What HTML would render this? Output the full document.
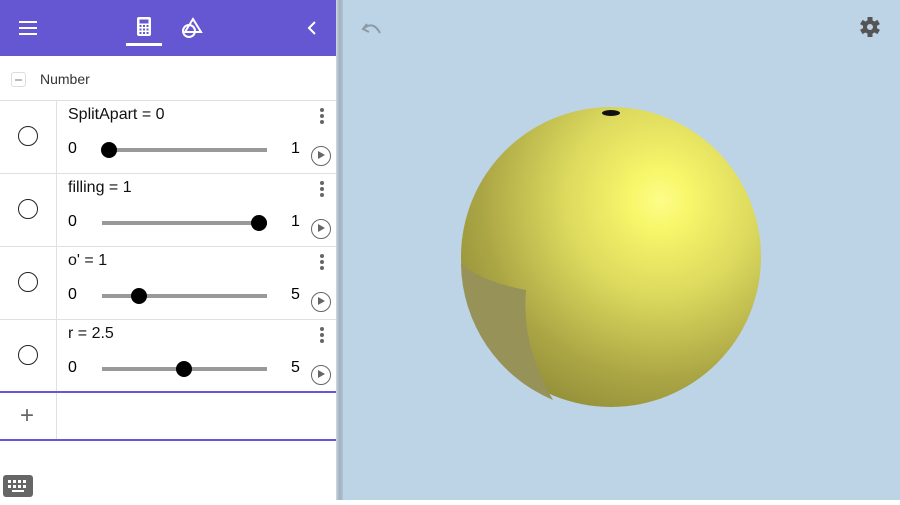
<!DOCTYPE html>
<html><head><style>
*{margin:0;padding:0;box-sizing:border-box}
body{width:900px;height:500px;position:relative;overflow:hidden;font-family:"Liberation Sans",sans-serif;background:#fff}
.hdr{position:absolute;left:0;top:0;width:336px;height:56px;background:#6557d2}
.div{position:absolute;left:336px;top:0;width:7px;height:500px;background:linear-gradient(90deg,#cfd8df,#9fb0c0 50%,#b0c2d2)}
.view{position:absolute;left:343px;top:0;width:557px;height:500px;background:#bdd3e6}
.row{position:absolute;left:0;width:336px;height:73px;border-bottom:1px solid #e0e0e0}
.row .vl{position:absolute;left:56px;top:0;width:1px;height:100%;background:#e0e0e0}
.circ{position:absolute;left:18px;top:25px;width:20px;height:20px;border:1.5px solid #222;border-radius:50%}
.lbl{position:absolute;left:68px;top:5px;font-size:16px;color:#111}
.n0{position:absolute;left:68px;top:39px;font-size:16px}
.n1{position:absolute;left:291px;top:39px;font-size:16px}
.trk{position:absolute;left:102px;top:47px;width:165px;height:4px;background:#999}
.knob{position:absolute;top:41px;width:16px;height:16px;border-radius:50%;background:#000}
.dots{position:absolute;left:320px;top:7px;width:4px}
.dots i{display:block;width:4px;height:4px;border-radius:50%;background:#666;margin-bottom:2px}
.play{position:absolute;left:311px;top:45px;width:20px;height:20px;border:1.5px solid #666;border-radius:50%}
.play:after{content:"";position:absolute;left:6px;top:4px;border-left:7px solid #666;border-top:4.5px solid transparent;border-bottom:4.5px solid transparent}
</style></head><body>
<div class="hdr">
<svg width="336" height="56" style="position:absolute;left:0;top:0">
<g stroke="#fff" stroke-width="2"><line x1="19" y1="22" x2="37" y2="22"/><line x1="19" y1="28" x2="37" y2="28"/><line x1="19" y1="34" x2="37" y2="34"/></g>
<rect x="137" y="17" width="14" height="19" rx="2" fill="#fff"/>
<rect x="139.5" y="19.5" width="9" height="4" fill="#6557d2"/>
<g fill="#6557d2"><rect x="139.5" y="25" width="2" height="2"/><rect x="143" y="25" width="2" height="2"/><rect x="146.5" y="25" width="2" height="2"/><rect x="139.5" y="28.5" width="2" height="2"/><rect x="143" y="28.5" width="2" height="2"/><rect x="146.5" y="28.5" width="2" height="2"/><rect x="139.5" y="32" width="2" height="2"/><rect x="143" y="32" width="2" height="2"/><rect x="146.5" y="32" width="2" height="2"/></g>
<rect x="126" y="43" width="36" height="3" fill="#fff"/>
<g fill="none" stroke="#fff" stroke-width="2"><circle cx="189" cy="31" r="6"/><path d="M193 19 L201 32 L185 32 Z"/></g>
<path d="M315 22 L309 28 L315 34" fill="none" stroke="#fff" stroke-width="2"/>
</svg></div>
<div style="position:absolute;left:11px;top:72px;width:15px;height:15px;border:1px solid #ddd;border-radius:3px"><div style="position:absolute;left:3px;top:6px;width:7px;height:1.5px;background:#bbb"></div></div>
<div style="position:absolute;left:40px;top:71px;font-size:14px;color:#333">Number</div>
<div style="position:absolute;left:0;top:100px;width:336px;height:1px;background:#e0e0e0"></div>

<div class="row" style="top:101px"><div class="vl"></div><div class="circ"></div><div class="lbl">SplitApart = 0</div><div class="n0">0</div><div class="n1">1</div><div class="trk"></div><div class="knob" style="left:101px"></div><div class="dots"><i></i><i></i><i></i></div><div class="play"></div></div>
<div class="row" style="top:174px"><div class="vl"></div><div class="circ"></div><div class="lbl">filling = 1</div><div class="n0">0</div><div class="n1">1</div><div class="trk"></div><div class="knob" style="left:251px"></div><div class="dots"><i></i><i></i><i></i></div><div class="play"></div></div>
<div class="row" style="top:247px"><div class="vl"></div><div class="circ"></div><div class="lbl">o' = 1</div><div class="n0">0</div><div class="n1">5</div><div class="trk"></div><div class="knob" style="left:131px"></div><div class="dots"><i></i><i></i><i></i></div><div class="play"></div></div>
<div class="row" style="top:320px;height:71px;border:none"><div class="vl"></div><div class="circ"></div><div class="lbl">r = 2.5</div><div class="n0">0</div><div class="n1">5</div><div class="trk"></div><div class="knob" style="left:176px"></div><div class="dots"><i></i><i></i><i></i></div><div class="play"></div></div>
<div style="position:absolute;left:0;top:391px;width:336px;height:2px;background:#6557d2"></div>
<div style="position:absolute;left:56px;top:393px;width:1px;height:47px;background:#e0e0e0"></div>
<div style="position:absolute;left:20px;top:406px;font-size:24px;color:#666;line-height:20px">+</div>
<div style="position:absolute;left:0;top:439px;width:336px;height:2px;background:#6557d2"></div>
<svg width="32" height="22" style="position:absolute;left:3px;top:475px"><rect width="30" height="22" rx="3" fill="#666"/><g fill="#fff"><rect x="5" y="5" width="3" height="3"/><rect x="10" y="5" width="3" height="3"/><rect x="15" y="5" width="3" height="3"/><rect x="20" y="5" width="3" height="3"/><rect x="5" y="10" width="3" height="3"/><rect x="10" y="10" width="3" height="3"/><rect x="15" y="10" width="3" height="3"/><rect x="20" y="10" width="3" height="3"/><rect x="9" y="15" width="12" height="2"/></g></svg>

<div class="div"></div>
<div class="view">
<svg width="557" height="500">
<defs>
<radialGradient id="g" cx="317" cy="200" r="240" gradientUnits="userSpaceOnUse">
<stop offset="0" stop-color="#fdfd8a"/><stop offset="0.12" stop-color="#f8f66a"/><stop offset="0.4" stop-color="#dcd95e"/><stop offset="0.75" stop-color="#aaa544"/><stop offset="1" stop-color="#8e8a36"/></radialGradient>
</defs>
<path d="M24 24 L20 29 L26 32 M20 29 Q30 20 37 33" fill="none" stroke="#8c9aa6" stroke-width="2"/>
<circle cx="268" cy="257" r="150" fill="url(#g)"/>
<path d="M118 264 Q140 282 183 290 Q178 345 210 400 A150 150 0 0 1 118 264 Z" fill="#979258"/>
<ellipse cx="268" cy="113" rx="9" ry="3" fill="#111"/>
<g transform="translate(527,27)" fill="#555"><circle r="7"/><g><rect x="-2.5" y="-10" width="5" height="20"/><rect x="-2.5" y="-10" width="5" height="20" transform="rotate(60)"/><rect x="-2.5" y="-10" width="5" height="20" transform="rotate(120)"/></g><circle r="3" fill="#bdd3e6"/></g>
</svg>
</div>
</body></html>
